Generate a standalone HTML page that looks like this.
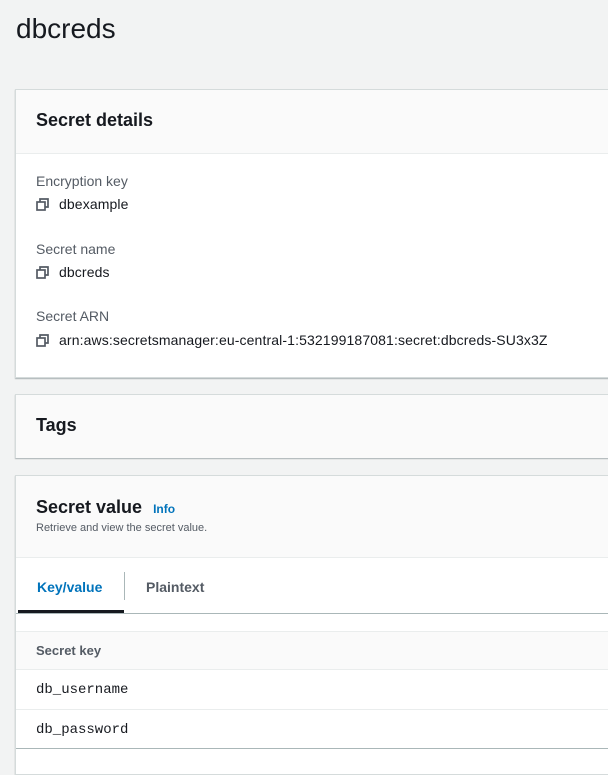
<!DOCTYPE html>
<html><head><style>
*{margin:0;padding:0;box-sizing:border-box}
body{width:608px;height:765px;overflow:hidden;background:#f2f3f3;font-family:"Liberation Sans",sans-serif;color:#16191f;position:relative}
.t{position:absolute;left:16px;top:13px;font-size:28px;color:#16191f}
.p{position:absolute;left:15px;width:600px;background:#fff;border:1px solid #d5dbdb;border-right:none;box-shadow:0 1px 1px rgba(0,28,36,.3)}
.h{background:#fafafa;border-bottom:1px solid #eaeded;position:relative}
.h b{position:absolute;left:20px;font-size:18px;font-weight:bold}
.lbl{position:absolute;left:20px;font-size:14px;color:#545b64}
.val{position:absolute;left:20px;font-size:14px;color:#16191f;display:flex;align-items:center;letter-spacing:0.12px}
.val svg{margin-right:10px}
.mono{font-family:"Liberation Mono",monospace;font-size:14px;position:absolute;left:20px}
</style></head><body>
<div class="t">dbcreds</div>

<div class="p" style="top:89px;height:289px">
 <div class="h" style="height:64px"><b style="top:20px">Secret details</b></div>
 <div class="lbl" style="top:83px">Encryption key</div>
 <div class="val" style="top:106px"><svg width="13" height="13" viewBox="0 0 13 13" fill="none" stroke="#545b64" stroke-width="1.7"><rect x="1" y="4" width="8" height="8"/><path d="M4 4V1h8v8H9"/></svg>dbexample</div>
 <div class="lbl" style="top:151px">Secret name</div>
 <div class="val" style="top:174px"><svg width="13" height="13" viewBox="0 0 13 13" fill="none" stroke="#545b64" stroke-width="1.7"><rect x="1" y="4" width="8" height="8"/><path d="M4 4V1h8v8H9"/></svg>dbcreds</div>
 <div class="lbl" style="top:218px">Secret ARN</div>
 <div class="val" style="top:242px"><svg width="13" height="13" viewBox="0 0 13 13" fill="none" stroke="#545b64" stroke-width="1.7"><rect x="1" y="4" width="8" height="8"/><path d="M4 4V1h8v8H9"/></svg>arn:aws:secretsmanager:eu-central-1:532199187081:secret:dbcreds-SU3x3Z</div>
</div>

<div class="p" style="top:394px;height:64px">
 <div class="h" style="height:63px;border:none"><b style="top:20px">Tags</b></div>
</div>

<div class="p" style="top:475px;height:300px">
 <div class="h" style="height:82px"><b style="top:21px">Secret value <span style="font-size:12px;color:#0073bb;margin-left:6px">Info</span></b>
  <div style="position:absolute;left:20px;top:46px;font-size:11px;color:#545b64">Retrieve and view the secret value.</div></div>
 <div style="position:relative;height:56px;border-bottom:1px solid #aab7b8">
  <div style="position:absolute;left:21px;top:21px;font-size:14px;font-weight:bold;color:#0073bb">Key/value</div>
  <div style="position:absolute;left:108px;top:14px;width:1px;height:28px;background:#aab7b8"></div>
  <div style="position:absolute;left:130px;top:21px;font-size:14px;font-weight:bold;color:#545b64">Plaintext</div>
  <div style="position:absolute;left:2px;top:52px;width:106px;height:3px;background:#16191f"></div>
 </div>
 <div style="position:relative;margin-top:17px;height:118px;border-bottom:1px solid #aab7b8">
  <div style="height:39px;background:#fafafa;border-top:1px solid #eaeded;border-bottom:1px solid #eaeded;position:relative"><div style="position:absolute;left:20px;top:11px;font-size:13px;font-weight:bold;color:#545b64">Secret key</div></div>
  <div style="height:40px;border-bottom:1px solid #eaeded;position:relative"><div class="mono" style="top:12px">db_username</div></div>
  <div style="height:39px;position:relative"><div class="mono" style="top:12px">db_password</div></div>
 </div>
</div>
</body></html>
